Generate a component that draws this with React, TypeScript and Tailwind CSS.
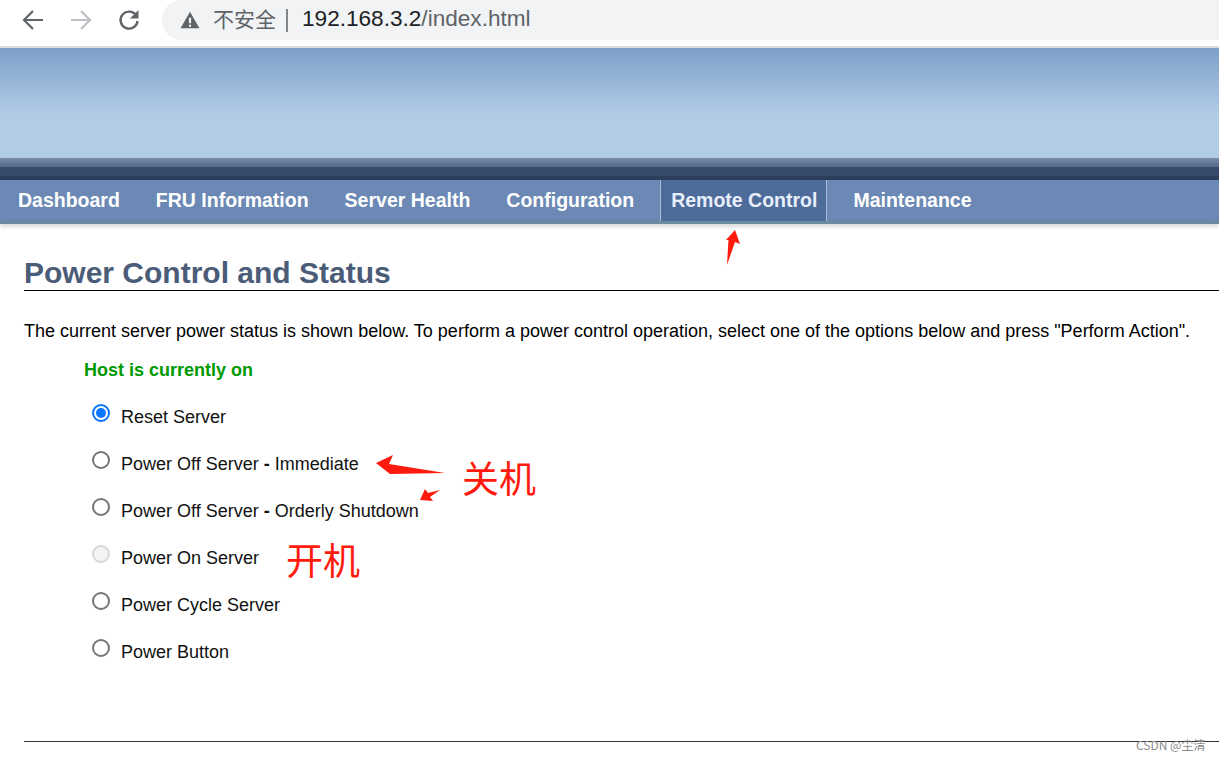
const navItems = [
  { label: "Dashboard", className: "ml-[18px]" },
  { label: "FRU Information", className: "ml-9" },
  { label: "Server Health", className: "ml-9" },
  { label: "Configuration", className: "ml-9" },
];

const options = [
  { label: "Reset Server", state: "checked" },
  { label: "Power Off Server", suffix: "Immediate" },
  { label: "Power Off Server", suffix: "Orderly Shutdown" },
  { label: "Power On Server", state: "disabled" },
  { label: "Power Cycle Server" },
  { label: "Power Button" },
];

function Radio({ state }: { state?: string }) {
  if (state === "checked") {
    return (
      <span className="flex h-[18px] w-[18px] items-center justify-center rounded-full border-2 border-[#0a75ff] bg-white">
        <span className="h-[10px] w-[10px] rounded-full bg-[#0a75ff]" />
      </span>
    );
  }
  if (state === "disabled") {
    return <span className="h-[18px] w-[18px] rounded-full border-2 border-[#d8d8d8] bg-[#f4f4f4]" />;
  }
  return <span className="h-[18px] w-[18px] rounded-full border-2 border-[#767676] bg-white" />;
}

function Toolbar() {
  return (
    <div className="flex h-[46px] items-center bg-white">
      <svg className="ml-[21px] h-6 w-6 -translate-y-[3px]" viewBox="0 0 24 24" fill="none" stroke="#5f6368" strokeWidth="2.2">
        <path d="M22 12H3M12 3l-9 9 9 9" />
      </svg>
      <svg className="ml-[24px] h-6 w-6 -translate-y-[3px]" viewBox="0 0 24 24" fill="none" stroke="#bdc1c6" strokeWidth="2.2">
        <path d="M2 12h19M12 3l9 9-9 9" />
      </svg>
      <svg className="ml-[24px] h-6 w-6 -translate-y-[3px]" viewBox="0 0 24 24" fill="none" stroke="#5f6368" strokeWidth="2.4">
        <path d="M19.5 8A8.5 8.5 0 1 0 20.5 13" />
        <path d="M21.5 2V10.5H13z" fill="#5f6368" stroke="none" />
      </svg>
      <div className="ml-[21px] flex h-10 flex-1 -translate-y-[3px] items-center rounded-l-[20px] bg-[#f1f3f4] pl-[18px]">
        <svg className="h-5 w-5" viewBox="0 0 18 18" fill="#5f6368">
          <path d="M9 1.5 17.5 16.5H.5zM8 7v5h2V7zm0 6.2v1.8h2v-1.8z" fillRule="evenodd" />
        </svg>
        <span className="ml-[13px] -translate-y-[2px] font-['Noto_Sans_CJK_SC',sans-serif] text-[21px] leading-none text-[#5f6368]">不安全</span>
        <span className="ml-[10px] h-[23px] w-[2px] bg-[#80868b]" />
        <span className="ml-[14px] -translate-y-[1px] text-[22.6px] leading-none text-[#5f6368]">
          <span className="text-[#202124]">192.168.3.2</span>/index.html
        </span>
      </div>
    </div>
  );
}

export default function App() {
  return (
    <div className="relative h-[761px] w-[1219px] overflow-hidden bg-white font-['Liberation_Sans',Arial,sans-serif] text-black">
      <Toolbar />
      <div className="h-[2px] bg-[#dadce0]" />

      <div className="h-[110px] bg-gradient-to-b from-[#7d9fc9] via-[#b2cce7] via-60% to-[#b2cce7]" />
      <div className="h-[9px] bg-gradient-to-b from-[#7c8ca8] to-[#54678a]" />
      <div className="h-[9px] bg-[#364b6b]" />
      <div className="h-1 bg-[#2d3f5d]" />

      <nav className="flex h-[41px] items-center bg-[#6b89b4] text-[19.5px] font-bold leading-[41px] text-white">
        {navItems.map((item) => (
          <span key={item.label} className={item.className}>
            {item.label}
          </span>
        ))}
        <span className="ml-[26px] flex h-[41px] items-center border-x border-[#a9bdd8] bg-[#4d6c9a] pl-[10px] pr-[9px] text-[#e8eefa]">
          Remote Control
        </span>
        <span className="ml-[26px]">Maintenance</span>
      </nav>
      <div className="h-[3px] bg-[#6a8a9f] shadow-[0_2px_4px_rgba(0,0,0,0.25)]" />

      <main className="pl-6">
        <h1 className="mt-[31px] border-b border-black text-[30px] font-bold leading-[35px] text-[#4a5c78]">
          Power Control and Status
        </h1>
        <p className="mt-[30px] whitespace-nowrap text-[18px] leading-[21px]">
          The current server power status is shown below. To perform a power control operation, select one of the options below and press "Perform Action".
        </p>
        <p className="ml-[60px] mt-[18px] text-[18px] font-bold leading-[21px] text-[#009900]">Host is currently on</p>
        <div className="ml-[68px] mt-[26px] flex flex-col gap-[26px]">
          {options.map((option) => (
            <label key={option.label + option.suffix} className="flex h-[21px] items-start">
              <span className="-mt-[3px] flex">
                <Radio state={option.state} />
              </span>
              <span className="ml-[11px] text-[18px] leading-[21px] text-[#111]">
                {option.label}
                {option.suffix && (
                  <>
                    {" "}
                    <b>-</b> {option.suffix}
                  </>
                )}
              </span>
            </label>
          ))}
        </div>
        <div className="mt-[78px] h-px bg-[#333]" />
      </main>

      {/* red annotations drawn over the page */}
      <svg className="absolute left-0 top-0 h-[761px] w-[1219px]" viewBox="0 0 1219 761" fill="#ff1a0d">
        <path d="M735 230 740 244 735 242 727 265 728.5 240 726 240z" />
        <path d="M376 463 393 455 389 464 445 473 390 474z" />
        <path d="M420 500 425 489 428 493 440 490 430 497 433 501z" />
      </svg>
      <span className="absolute left-[462px] top-[454px] font-['Noto_Sans_CJK_SC',sans-serif] text-[37px] leading-[46px] text-[#ff1a0d]">关机</span>
      <span className="absolute left-[286px] top-[536px] font-['Noto_Sans_CJK_SC',sans-serif] text-[37px] leading-[46px] text-[#ff1a0d]">开机</span>
      <span className="absolute left-[1136px] top-[738px] font-['Noto_Sans_CJK_SC',sans-serif] text-[12px] leading-[14px] text-[#8a8a8a]">CSDN @尘清</span>
    </div>
  );
}
